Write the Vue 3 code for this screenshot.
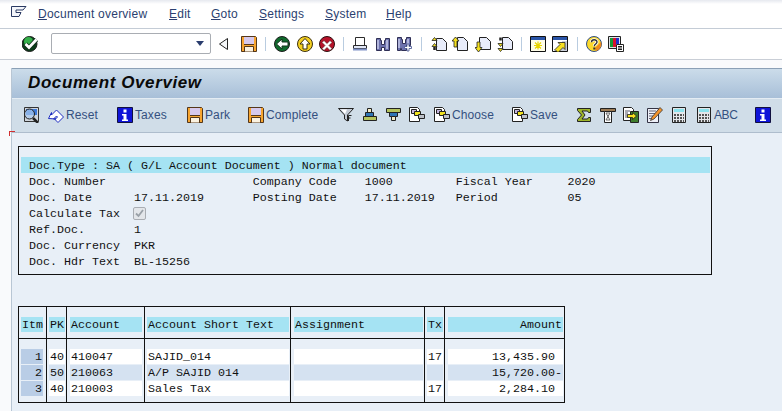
<script setup>
const menus = [
  { first: 'D', rest: 'ocument overview', w: 131 },
  { first: 'E', rest: 'dit', w: 42 },
  { first: 'G', rest: 'oto', w: 48 },
  { first: 'S', rest: 'ettings', w: 66 },
  { first: 'S', rest: 'ystem', w: 61 },
  { first: 'H', rest: 'elp', w: 40 }
]

const place = (items, end) =>
  items.map((it, i) => ({ ...it, w: (i + 1 < items.length ? items[i + 1].x : end) - it.x }))

const sysItems = place([
  { x: 22, icon: 'check', s: 16 },
  { x: 51, combo: true },
  { x: 218, icon: 'tri', s: 12 },
  { x: 241, icon: 'save', s: 16 },
  { x: 265, sep: true },
  { x: 274, icon: 'back', s: 16 },
  { x: 297, icon: 'up', s: 16 },
  { x: 319, icon: 'cancel', s: 16 },
  { x: 343, sep: true },
  { x: 352, icon: 'print', s: 16 },
  { x: 375, icon: 'find', s: 16 },
  { x: 396, icon: 'findnext', s: 16 },
  { x: 421, sep: true },
  { x: 431, icon: 'first', s: 16 },
  { x: 452, icon: 'prev', s: 16 },
  { x: 475, icon: 'next', s: 16 },
  { x: 497, icon: 'last', s: 16 },
  { x: 521, sep: true },
  { x: 530, icon: 'newwin', s: 16 },
  { x: 552, icon: 'shortcut', s: 16 },
  { x: 577, sep: true },
  { x: 586, icon: 'help', s: 16 },
  { x: 608, icon: 'layout', s: 16 }
], 640)

const appItems = place([
  { x: 23, icon: 'display' },
  { x: 48, icon: 'reset', text: 'Reset' },
  { x: 117, icon: 'info', text: 'Taxes' },
  { x: 187, icon: 'save', text: 'Park' },
  { x: 248, icon: 'save', text: 'Complete' },
  { x: 338, icon: 'filter' },
  { x: 362, icon: 'sortup' },
  { x: 386, icon: 'sortdn' },
  { x: 409, icon: 'choose' },
  { x: 434, icon: 'choose', text: 'Choose' },
  { x: 512, icon: 'choose', text: 'Save' },
  { x: 576, icon: 'sigma' },
  { x: 600, icon: 'subtotal' },
  { x: 623, icon: 'export' },
  { x: 647, icon: 'edit' },
  { x: 672, icon: 'calc' },
  { x: 697, icon: 'calc', text: 'ABC' },
  { x: 755, icon: 'info' }
], 772)

const infoLines = [
  'Doc. Number                     Company Code    1000         Fiscal Year     2020',
  'Doc. Date      17.11.2019       Posting Date    17.11.2019   Period          05'
]
const infoTail = [
  'Ref.Doc.       1',
  'Doc. Currency  PKR',
  'Doc. Hdr Text  BL-15256'
]

const columns = [
  { key: 'itm', label: 'Itm' },
  { key: 'pk', label: 'PK' },
  { key: 'account', label: 'Account' },
  { key: 'text', label: 'Account Short Text' },
  { key: 'assign', label: 'Assignment' },
  { key: 'tx', label: 'Tx' },
  { key: 'amount', label: 'Amount' }
]
const rows = [
  { itm: '1', pk: '40', account: '410047', text: 'SAJID_014', assign: '', tx: '17', amount: '13,435.90 ' },
  { itm: '2', pk: '50', account: '210063', text: 'A/P SAJID 014', assign: '', tx: '', amount: '15,720.00-' },
  { itm: '3', pk: '40', account: '210003', text: 'Sales Tax', assign: '', tx: '17', amount: '2,284.10 ' }
]
</script>

<template>
  <div class="app">
    <svg class="defs" aria-hidden="true">
      <symbol id="i-check" viewBox="0 0 16 16">
        <circle cx="7.500" cy="8" r="7.500" fill="#0b3d1a" stroke="#1c1c1c" />
        <circle cx="6.500" cy="5.500" r="4.500" fill="#35b04a" />
        <path d="M3.500 8l3.500 3.500L14.500 3.500" fill="none" stroke="#10301a" stroke-width="4.500" />
        <path d="M3.500 8l3.500 3.500L14.500 3.500" fill="none" stroke="#fff" stroke-width="2.800" />
      </symbol>
      <symbol id="i-tri" viewBox="0 0 12 12">
        <path d="M9.500.5v11L1.500 6z" fill="#f4f6f8" stroke="#222" />
      </symbol>
      <symbol id="i-save" viewBox="0 0 16 16">
        <path d="M.5.5h14l1 1v14H.5z" fill="#f7a530" stroke="#54371a" />
        <path d="M3 1h10v7H3z" fill="#d6c9ec" />
        <path d="M3.500 10.500h9V16h-9z" fill="#fbf2e0" stroke="#54371a" />
        <path d="M3 8.500h10" stroke="#54371a" />
      </symbol>
      <symbol id="i-back" viewBox="0 0 16 16">
        <circle cx="8" cy="8" r="7.500" fill="#0f6a2c" stroke="#1c1c1c" />
        <path d="M2.500 8L8 3v3h6v4H8v3z" fill="#fff" stroke="#14331c" />
      </symbol>
      <symbol id="i-up" viewBox="0 0 16 16">
        <circle cx="8" cy="8" r="7.500" fill="#f5d020" stroke="#3b3010" />
        <path d="M8 2.500L13 8h-3v5H6V8H3z" fill="#fff" stroke="#3b3010" />
      </symbol>
      <symbol id="i-cancel" viewBox="0 0 16 16">
        <circle cx="8" cy="8" r="7.500" fill="#b8122a" stroke="#2a1010" />
        <path d="M5 4.500l3 3 3-3 2 2-3 3 3 3-2 2-3-3-3 3-2-2 3-3-3-3z" fill="#fff" stroke="#411" stroke-width=".6" />
      </symbol>
      <symbol id="i-print" viewBox="0 0 16 16">
        <path d="M3.500 1.500h9v8h-9z" fill="#fff" stroke="#2b2b2b" />
        <path d="M1.500 9.500h13v3h-13z" fill="#e3e8f6" stroke="#2b2b2b" />
        <path d="M1 13.500h14" stroke="#8092c6" stroke-width="2" />
      </symbol>
      <symbol id="i-find" viewBox="0 0 16 16">
        <path d="M1.500 2.500h4v2h1v4h3v-4h1v-2h4v12h-5v-3h-3v3h-5z" fill="#6d72ad" stroke="#2f2f55" />
        <path d="M3 4v9M12 4v9" stroke="#c7cbea" stroke-width="1.500" />
      </symbol>
      <symbol id="i-findnext" viewBox="0 0 16 16">
        <path d="M1.500 1.500h4v2h1v4h3v-4h1v-2h4v8h-4v5h-5v-2h-1v2h-3z" fill="#6d72ad" stroke="#2f2f55" />
        <path d="M3 3v9M12 3v5" stroke="#c7cbea" stroke-width="1.500" />
        <path d="M11 8h2v2.500h2.500v2H13V15h-2v-2.500H8.500v-2H11z" fill="#fff" stroke="#41508f" stroke-width=".8" />
      </symbol>
      <symbol id="i-first" viewBox="0 0 16 16">
        <path d="M5.500 2.500h6l4 4v8h-10z" fill="#e8ecfa" stroke="#222" />
        <path d="M3.500 1.500l2.500 3H1zM3.500 7.500l2.500 3H1z" fill="#f4e020" stroke="#222" stroke-width=".8" />
        <path d="M3.500 11v3" stroke="#222" stroke-width="2.500" />
      </symbol>
      <symbol id="i-prev" viewBox="0 0 16 16">
        <path d="M5.500 1.500h6l4 4v9h-10z" fill="#e8ecfa" stroke="#222" />
        <path d="M3.500 1L7 5H5v6H2V5H0z" fill="#f4e020" stroke="#222" stroke-width=".8" />
      </symbol>
      <symbol id="i-next" viewBox="0 0 16 16">
        <path d="M4.500 1.500h7l4 4v8h-11z" fill="#e8ecfa" stroke="#222" />
        <path d="M3.500 16L7 11.500H5V6H2v5.500H0z" fill="#f4e020" stroke="#222" stroke-width=".8" />
      </symbol>
      <symbol id="i-last" viewBox="0 0 16 16">
        <path d="M5.500 1.500h6l4 4v8h-10z" fill="#e8ecfa" stroke="#222" />
        <path d="M3.500 1.500v3" stroke="#222" stroke-width="2.500" />
        <path d="M3.500 10.500L6 7.500H1zM3.500 15.500l2.500-3H1z" fill="#f4e020" stroke="#222" stroke-width=".8" />
      </symbol>
      <symbol id="i-newwin" viewBox="0 0 16 16">
        <path d="M.5.5h15v15H.5z" fill="#fffde8" stroke="#111" />
        <path d="M1 1h14v3H1z" fill="#2a55a8" />
        <path d="M8 5.500v8M4 9.500h8M5 6.500l6 6M11 6.500l-6 6" stroke="#e8d400" stroke-width="1.200" />
      </symbol>
      <symbol id="i-shortcut" viewBox="0 0 16 16">
        <path d="M.5.500h15v15H.5z" fill="#fff" stroke="#111" />
        <path d="M1 1h14v3H1z" fill="#2a55a8" />
        <path d="M10 5h5v10H2v-2h8z" fill="#c9ced8" />
        <path d="M3 13.500l5-5-2-2h7v7l-2-2-5 5z" fill="#f7e020" stroke="#222" stroke-width=".8" />
      </symbol>
      <symbol id="i-help" viewBox="0 0 16 16">
        <circle cx="8" cy="8" r="7.500" fill="#fbd92b" stroke="#2f4d86" />
        <path d="M15 6a7 7 0 0 1-5 9l-1-3z" fill="#ee8a1e" />
        <path d="M5.500 6.200C5.500 3 11 3 11 6c0 2-2.700 2-2.700 4.200" fill="none" stroke="#fff" stroke-width="3" />
        <path d="M5.500 6.200C5.500 3 11 3 11 6c0 2-2.700 2-2.700 4.200" fill="none" stroke="#333" stroke-width="1.400" />
        <path d="M7.300 11.500h2v2h-2z" fill="#333" />
      </symbol>
      <symbol id="i-layout" viewBox="0 0 16 16">
        <path d="M.5.500h12v12H.5z" fill="#dfe3e8" stroke="#222" />
        <path d="M2 2h3v9H2z" fill="#159a35" />
        <path d="M5 2h3v9H5z" fill="#d8122c" />
        <path d="M8 2h3v6H8z" fill="#1f2fc8" />
        <path d="M8.500 8.500h7v7h-7z" fill="#fff" stroke="#222" />
        <path d="M10 10.500h4M10 12h4M10 13.500h4" stroke="#222" />
      </symbol>
      <symbol id="i-display" viewBox="0 0 16 16">
        <path d="M1.500.5h14v14h-14z" fill="#cfd5dc" stroke="#333" />
        <path d="M3 2h11v6H3z" fill="#3b78d8" />
        <circle cx="6.500" cy="7" r="5" fill="#a9c9ef" fill-opacity=".7" stroke="#222" />
        <path d="M10 11l5 5" stroke="#222" stroke-width="2.500" />
      </symbol>
      <symbol id="i-reset" viewBox="0 0 16 16">
        <path d="M.5 11.500l3-6v2.500l5-5 7 7-5.500 5.500-3-3 2.500-2.500-1-1-3 3h2.500z" fill="#fff" stroke="#1e2cc0" />
      </symbol>
      <symbol id="i-info" viewBox="0 0 16 16">
        <path d="M.5.5h15v15H.5z" fill="#0f14d8" stroke="#101040" />
        <path d="M6.500 2.500h3v3h-3zM5 7h4.500v5.500H11V14H5v-1.500h1.500V8.500H5z" fill="#fff" />
      </symbol>
      <symbol id="i-filter" viewBox="0 0 16 16">
        <path d="M.5 1.500h15L9.500 8v6l-3-2V8z" fill="#c4cbd6" stroke="#222" />
        <path d="M3 2.500h6L7 7z" fill="#fff" />
        <path d="M10.500 8.500h3M10.500 11h2M10.500 8.500V14" stroke="#222" />
      </symbol>
      <symbol id="i-sortup" viewBox="0 0 16 16">
        <path d="M5.500 1.500h4v4h-4z" fill="#f3ecc6" stroke="#222" />
        <path d="M3.500 5.500h8v4h-8z" fill="#2f74b5" stroke="#222" />
        <path d="M1.500 9.500h13v4h-13z" fill="#b4c35c" stroke="#222" />
      </symbol>
      <symbol id="i-sortdn" viewBox="0 0 16 16">
        <path d="M.5 1.500h14v4H.5z" fill="#b4c35c" stroke="#222" />
        <path d="M3.500 5.500h8v4h-8z" fill="#2f74b5" stroke="#222" />
        <path d="M5.500 9.500h4v4h-4z" fill="#f3ecc6" stroke="#222" />
      </symbol>
      <symbol id="i-choose" viewBox="0 0 16 16">
        <path d="M.5.5h8l2 2v12H.5z" fill="#fff" stroke="#222" />
        <path d="M2.500 2.500h5v4h-5z" fill="#c5b5e0" stroke="#222" />
        <path d="M5.500 4.500h6v4h-6z" fill="#f2e21e" stroke="#222" />
        <path d="M9.500 7.500h6v4h-6z" fill="#bcc0c8" stroke="#222" />
      </symbol>
      <symbol id="i-sigma" viewBox="0 0 16 16">
        <path d="M1.500 1.500h13v4h-2l-1-1.500H6l3 4-3 4h5.500l1-1.500h2v4h-13v-2l4-4.500-4-4.500z" fill="#9fb52a" stroke="#222" />
      </symbol>
      <symbol id="i-subtotal" viewBox="0 0 16 16">
        <path d="M.5 1.500h15v3H.5z" fill="#9c7a52" stroke="#222" />
        <path d="M4.500 4.500h7v11h-7z" fill="#fff" stroke="#222" />
        <path d="M6 6h4L6 13h4z" fill="none" stroke="#666" />
      </symbol>
      <symbol id="i-export" viewBox="0 0 16 16">
        <path d="M.5.500h8l2 2v11H.5z" fill="#fff" stroke="#222" />
        <path d="M2 4h5M2 6h3M2 8h3M2 10h3" stroke="#556" />
        <path d="M7.500 4.500h8v11h-8z" fill="#3f7d2b" stroke="#222" />
        <path d="M4.500 7.500h5v-2l4 3.500-4 3.500v-2h-5z" fill="#f7e020" stroke="#222" stroke-width=".8" />
      </symbol>
      <symbol id="i-edit" viewBox="0 0 16 16">
        <path d="M.5 1.500h11v14H.5z" fill="#eef0f8" stroke="#334" />
        <path d="M2 4h7M2 6.500h6M2 9h4M2 11.500h3" stroke="#667" />
        <path d="M13 .5l2.500 2.500L7 12l-3.500 1.500L5 10z" fill="#f4932a" stroke="#333" stroke-width=".8" />
      </symbol>
      <symbol id="i-calc" viewBox="0 0 14 16">
        <path d="M.5.500h13v15H.5z" fill="#e4e6ea" stroke="#222" />
        <path d="M2 2h10v3H2z" fill="#8be3ee" />
        <path d="M2 8h10M2 11h10M2 14h10" stroke="#555" stroke-width="2" stroke-dasharray="2 1" />
      </symbol>
    </svg>

    <nav class="menubar">
      <svg class="menu-icon" viewBox="0 0 16 11" width="16" height="11">
        <path d="M.5.5h14.500l-3 3.500h-7v2.500h5L8 10.500H.5z" fill="#f4f6fb" stroke="#2b3a63" />
      </svg>
      <span v-for="m in menus" :key="m.rest" class="menu-item" :style="{ width: m.w + 'px' }"><u>{{ m.first }}</u>{{ m.rest }}</span>
    </nav>

    <div class="systoolbar">
      <template v-for="it in sysItems" :key="it.x">
        <div class="slot" :style="{ width: it.w + 'px' }">
          <div v-if="it.combo" class="combo"><span class="combo-arrow"></span></div>
          <span v-else-if="it.sep" class="sep"></span>
          <svg v-else class="ico" :width="it.s" :height="it.icon === 'tri' ? 12 : 16"><use :href="'#i-' + it.icon" /></svg>
        </div>
      </template>
    </div>

    <main class="main">
      <span class="corner"></span>
      <h1 class="title">Document Overview</h1>
      <div class="apptoolbar">
        <div v-for="it in appItems" :key="it.x" class="slot" :style="{ width: it.w + 'px' }">
          <svg class="ico" :width="it.icon === 'calc' ? 14 : 16" height="16"><use :href="'#i-' + it.icon" /></svg>
          <span v-if="it.text" class="btn-text" :class="{ wide: it.icon === 'calc' }">{{ it.text }}</span>
        </div>
      </div>

      <div class="content">
        <section class="infobox">
          <div class="doc-type">Doc.Type : SA ( G/L Account Document ) Normal document</div>
          <div v-for="l in infoLines" :key="l" class="line">{{ l }}</div>
          <div class="line">Calculate Tax <span class="check"><svg width="11" height="11" viewBox="0 0 11 11"><path d="M2 5.500l2.500 2.500L9 2" fill="none" stroke="#9aa1a8" stroke-width="1.800" /></svg></span></div>
          <div v-for="t in infoTail" :key="t" class="line">{{ t }}</div>
        </section>

        <section class="items">
          <div class="grid-head">
            <div v-for="c in columns" :key="c.key" class="hcol" :class="'c-' + c.key"><span>{{ c.label }}</span></div>
          </div>
          <div class="grid-body">
            <div v-for="c in columns" :key="c.key" class="bcol" :class="'c-' + c.key">
              <div v-for="(r, i) in rows" :key="i" class="cell" :class="{ alt: i === 1 }">{{ r[c.key] }}</div>
            </div>
          </div>
        </section>
      </div>
    </main>
  </div>
</template>

<style scoped>
.app {
  position: relative;
  width: 782px;
  height: 411px;
  overflow: hidden;
  background: #f9fafc;
  font-family: "Liberation Sans", Arial, sans-serif;
}
.defs { display: block; width: 0; height: 0; }

.menubar {
  display: flex;
  align-items: center;
  height: 29px;
  box-sizing: border-box;
  padding: 0 0 0 38px;
  background: linear-gradient(#e6e9ef 0, #fff 4px);
  border-bottom: 1px solid #c4ccd6;
  position: relative;
  font-size: 12px;
  letter-spacing: .23px;
  color: #2b3f70;
}
.menu-icon { position: absolute; left: 11px; top: 6px; }
.menu-item { flex: none; white-space: nowrap; }
.menu-item u { text-underline-offset: 1px; }

.systoolbar {
  display: flex;
  align-items: center;
  height: 31px;
  box-sizing: border-box;
  padding: 0 0 1px 22px;
  background: #fff;
  border-bottom: 1px solid #c9ced6;
}
.slot { flex: none; display: flex; align-items: center; height: 100%; }
.ico { flex: none; display: block; }
.sep { display: block; width: 1px; height: 14px; background: #b9cce0; }
.combo {
  flex: none;
  position: relative;
  width: 160px;
  height: 21px;
  box-sizing: border-box;
  background: #fff;
  border: 1px solid #a9adb3;
  border-radius: 2px;
}
.combo-arrow {
  position: absolute;
  right: 6px;
  top: 7px;
  border-left: 4px solid transparent;
  border-right: 4px solid transparent;
  border-top: 5px solid #2a3d6e;
}

.main {
  position: relative;
  margin: 8px 0 0 11px;
  border-left: 1px solid #b8c6d4;
  height: 343px;
  display: flex;
  flex-direction: column;
}
.corner {
  position: absolute;
  left: -3px;
  top: 63px;
  width: 5px;
  height: 4px;
  border-left: 1px solid #d23030;
  border-top: 1px solid #d23030;
  z-index: 2;
}
.title {
  margin: 0;
  flex: none;
  height: 31px;
  box-sizing: border-box;
  border-top: 1px solid #8ba0b6;
  border-bottom: 1px solid #e4ecf3;
  padding: 2px 0 0 16px;
  background: linear-gradient(#cbdcea, #a8bfd8);
  font-size: 17px;
  line-height: 24px;
  font-weight: bold;
  font-style: italic;
  color: #0a0a0a;
  letter-spacing: .6px;
}
.apptoolbar {
  flex: none;
  display: flex;
  align-items: center;
  height: 34px;
  box-sizing: border-box;
  padding: 0 0 2px 11px;
  background: #d0dde8;
  border-bottom: 1px solid #aebdcd;
}
.btn-text {
  margin-left: 2px;
  font-size: 12px;
  letter-spacing: .1px;
  color: #34507f;
  white-space: nowrap;
}
.btn-text.wide { margin-left: 3px; letter-spacing: -.4px; }

.content {
  flex: 1;
  background: #e8eff7;
  padding: 13px 0 0 6px;
  font-family: "Liberation Mono", "Courier New", monospace;
  font-size: 11.67px;
  color: #111;
}
.infobox {
  width: 694px;
  height: 129px;
  box-sizing: border-box;
  border: 1px solid #111;
  padding: 10px 0 0 2px;
}
.doc-type {
  height: 16px;
  line-height: 18px;
  padding-left: 8px;
  margin-right: 1px;
  background: #a5e3f3;
  white-space: pre;
}
.line {
  height: 16px;
  line-height: 18px;
  padding-left: 8px;
  white-space: pre;
}
.check {
  display: inline-flex;
  align-items: center;
  justify-content: center;
  box-sizing: border-box;
  width: 13px;
  height: 13px;
  margin-left: 6px;
  vertical-align: -2px;
  border: 1px solid #a9adb3;
  border-radius: 2px;
  background: #e3e6ea;
}

.items {
  width: 547px;
  margin-top: 31px;
  box-sizing: border-box;
  border: 1px solid #111;
}
.grid-head, .grid-body { display: flex; }
.grid-head { height: 31px; border-bottom: 1px solid #111; }
.grid-body { height: 63px; }
.hcol, .bcol {
  flex: none;
  box-sizing: border-box;
  padding: 0 1px 0 2px;
  border-right: 1px solid #111;
}
.hcol:last-child, .bcol:last-child { border-right: 0; }
.hcol { padding-top: 10px; }
.hcol span {
  display: block;
  height: 15px;
  line-height: 17px;
  padding: 0 1px;
  background: #a5e3f3;
  white-space: pre;
}
.bcol { padding-top: 10px; }
.cell {
  height: 15px;
  line-height: 17px;
  margin-bottom: 1px;
  padding: 0 1px;
  background: #fff;
  white-space: pre;
}
.cell.alt { background: #d5e2f1; }
.c-itm { width: 28px; padding-right: 3px; }
.c-pk { width: 20px; }
.c-account { width: 78px; padding-right: 2px; padding-left: 3px; }
.c-text { width: 146px; padding-right: 1px; padding-left: 2px; }
.c-assign { width: 134px; padding-right: 1px; padding-left: 3px; }
.c-tx { width: 20px; }
.c-amount { width: 119px; padding-left: 3px; }
.hcol.c-amount span, .bcol.c-amount .cell, .bcol.c-itm .cell, .bcol.c-pk .cell { text-align: right; }
.bcol.c-itm .cell, .bcol.c-itm .cell.alt { background: #b9cde6; }
</style>
